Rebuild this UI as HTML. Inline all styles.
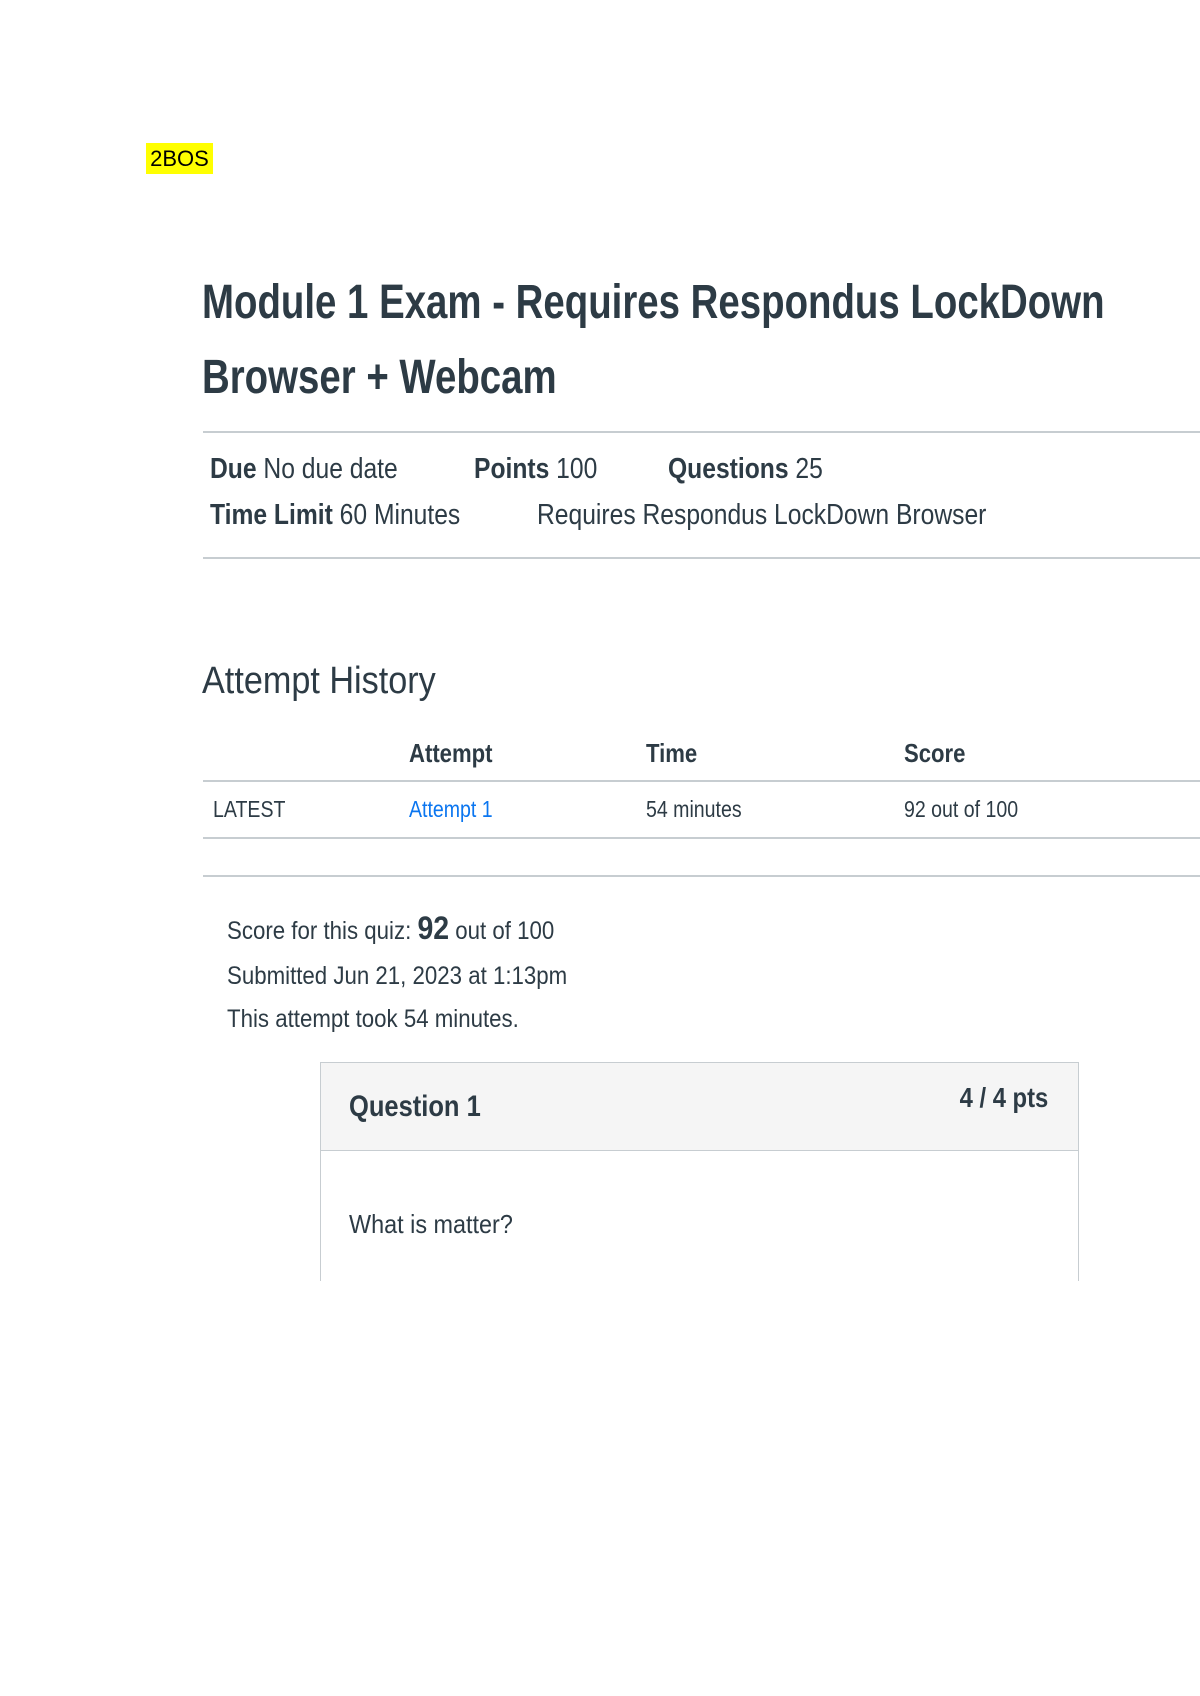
<!DOCTYPE html>
<html><head><meta charset="utf-8"><style>
body{margin:0;background:#fff;width:1200px;height:1696px;position:relative;font-family:"Liberation Sans",sans-serif;color:#2d3b45;overflow:hidden}
.a{position:absolute;white-space:nowrap;transform:scaleX(.85);transform-origin:left center}
.hr{position:absolute;left:203px;right:0;height:2px;background:#c7cdd1}
b{font-weight:bold}
</style></head><body>
<div class="a" style="left:146px;top:143px;width:67px;height:31px;background:#ffff00;font-size:22px;line-height:31px;color:#000;text-align:center;transform:none">2BOS</div>
<div class="a" style="left:202px;top:276px;font-size:48px;line-height:54px;font-weight:bold;transform:scaleX(.80)">Module 1 Exam - Requires Respondus LockDown</div>
<div class="a" style="left:202px;top:351px;font-size:48px;line-height:54px;font-weight:bold;transform:scaleX(.80)">Browser + Webcam</div>
<div class="hr" style="top:431px"></div>
<div class="a" style="left:210px;top:453px;font-size:29px;line-height:32px"><b>Due</b> No due date</div>
<div class="a" style="left:474px;top:453px;font-size:29px;line-height:32px"><b>Points</b> 100</div>
<div class="a" style="left:668px;top:453px;font-size:29px;line-height:32px"><b>Questions</b> 25</div>
<div class="a" style="left:210px;top:499px;font-size:29px;line-height:32px"><b>Time Limit</b> 60 Minutes</div>
<div class="a" style="left:537px;top:499px;font-size:29px;line-height:32px">Requires Respondus LockDown Browser</div>
<div class="hr" style="top:557px"></div>
<div class="a" style="left:202px;top:659px;font-size:38px;line-height:44px;transform:scaleX(.9)">Attempt History</div>
<div class="a" style="left:409px;top:738px;font-size:26px;line-height:30px"><b>Attempt</b></div>
<div class="a" style="left:646px;top:738px;font-size:26px;line-height:30px"><b>Time</b></div>
<div class="a" style="left:904px;top:738px;font-size:26px;line-height:30px"><b>Score</b></div>
<div class="hr" style="top:780px"></div>
<div class="a" style="left:213px;top:795px;font-size:23px;line-height:28px">LATEST</div>
<div class="a" style="left:409px;top:795px;font-size:23px;line-height:28px;color:#0b76f0">Attempt 1</div>
<div class="a" style="left:646px;top:795px;font-size:23px;line-height:28px">54 minutes</div>
<div class="a" style="left:904px;top:795px;font-size:23px;line-height:28px">92 out of 100</div>
<div class="hr" style="top:837px"></div>
<div class="hr" style="top:875px"></div>
<div class="a" style="left:227px;top:911px;font-size:25px;line-height:34px;transform:scaleX(.89)">Score for this quiz: <b style="font-size:32px">92</b> out of 100</div>
<div class="a" style="left:227px;top:961px;font-size:25px;line-height:30px;transform:scaleX(.89)">Submitted Jun 21, 2023 at 1:13pm</div>
<div class="a" style="left:227px;top:1004px;font-size:25px;line-height:30px;transform:scaleX(.89)">This attempt took 54 minutes.</div>
<div style="position:absolute;left:320px;top:1062px;width:757px;height:218px;border:1px solid #c7cdd1;border-bottom:none">
<div style="height:87px;background:#f5f5f5;border-bottom:1px solid #c7cdd1;position:relative">
<div class="a" style="left:28px;top:26px;font-size:30px;line-height:36px"><b>Question 1</b></div>
<div class="a" style="right:30px;top:18px;font-size:28px;line-height:34px;transform-origin:right center"><b>4 / 4 pts</b></div>
</div>
<div class="a" style="left:28px;top:146px;font-size:26px;line-height:30px;transform:scaleX(.9)">What is matter?</div>
</div>
</body></html>
